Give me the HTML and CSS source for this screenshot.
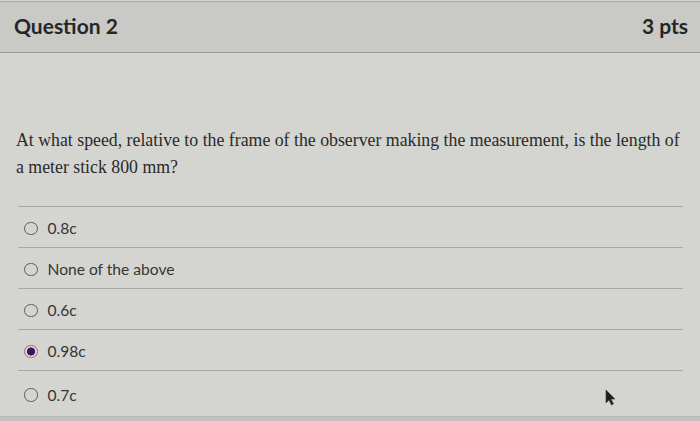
FILE: index.html
```html
<!DOCTYPE html>
<html>
<head>
<meta charset="utf-8">
<link rel="stylesheet" href="styles.css">
</head>
<body>
<div class="card">
  <div class="header">
    <span class="title">Question 2</span>
    <span class="pts">3 pts</span>
  </div>
  <div class="body">
    <p class="question">At what speed, relative to the frame of the observer making the measurement, is the length of a meter stick 800 mm?</p>
    <div class="answers">
      <div class="answer"><span class="radio"></span><span class="label">0.8c</span></div>
      <div class="answer"><span class="radio"></span><span class="label">None of the above</span></div>
      <div class="answer"><span class="radio"></span><span class="label">0.6c</span></div>
      <div class="answer"><span class="radio checked"></span><span class="label">0.98c</span></div>
      <div class="answer last"><span class="radio"></span><span class="label">0.7c</span></div>
    </div>
  </div>
  <div class="bottom"></div>
  <svg class="cursor" width="12" height="17" viewBox="0 0 12 17"><path d="M1 1 L1 14 L4 11 L6.5 16 L8.5 15 L6 10 L10 10 Z" fill="#1e1e1e" stroke="#3a3a3a" stroke-width="0.6"/></svg>
</div>
</body>
</html>
```
FILE: styles.css
```css
html, body {
  margin: 0;
  padding: 0;
  background: #d3d4d0;
}
.card {
  position: relative;
  width: 700px;
  height: 421px;
  overflow: hidden;
  background: #d4d5d1;
  font-family: Lato, "Liberation Sans", sans-serif;
}
.header {
  height: 50px;
  margin-top: 1px;
  border-top: 1px solid #a9aaa6;
  border-bottom: 1px solid #9a9b97;
  background: #c9cac6;
  display: flex;
  align-items: center;
  justify-content: space-between;
  padding: 0 12px 0 14px;
}
.title, .pts {
  font-weight: 700;
  font-size: 21px;
  color: #262626;
  margin-top: -4px;
}
.body {
  padding: 74px 17px 0 16px;
}
.question {
  margin: 0;
  font-family: "Liberation Serif", "Times New Roman", serif;
  font-size: 17.8px;
  line-height: 27px;
  color: #2a2a2a;
}
.answers {
  margin: 25px 0 0 2px;
}
.answer {
  height: 41px;
  border-top: 1px solid #a8a9a5;
  display: flex;
  align-items: center;
  padding-left: 6px;
  gap: 10px;
  box-sizing: border-box;
}
.answer.last {
  height: 46px;
}
.radio {
  width: 11.5px;
  height: 11.5px;
  border: 1.5px solid #5a5a5a;
  border-radius: 50%;
  margin-top: 3px;
}
.radio.checked {
  border-color: #8a6e9a;
  background: radial-gradient(circle, #3d1856 0 3.8px, #d9d3dc 4.3px);
}
.label {
  font-size: 15.6px;
  color: #363636;
  margin-top: 2px;
}
.bottom {
  border-top: 1px solid #b7b8b4;
  background: #c3c4c0;
  height: 5px;
}
.cursor {
  position: absolute;
  left: 605px;
  top: 389px;
}
```
